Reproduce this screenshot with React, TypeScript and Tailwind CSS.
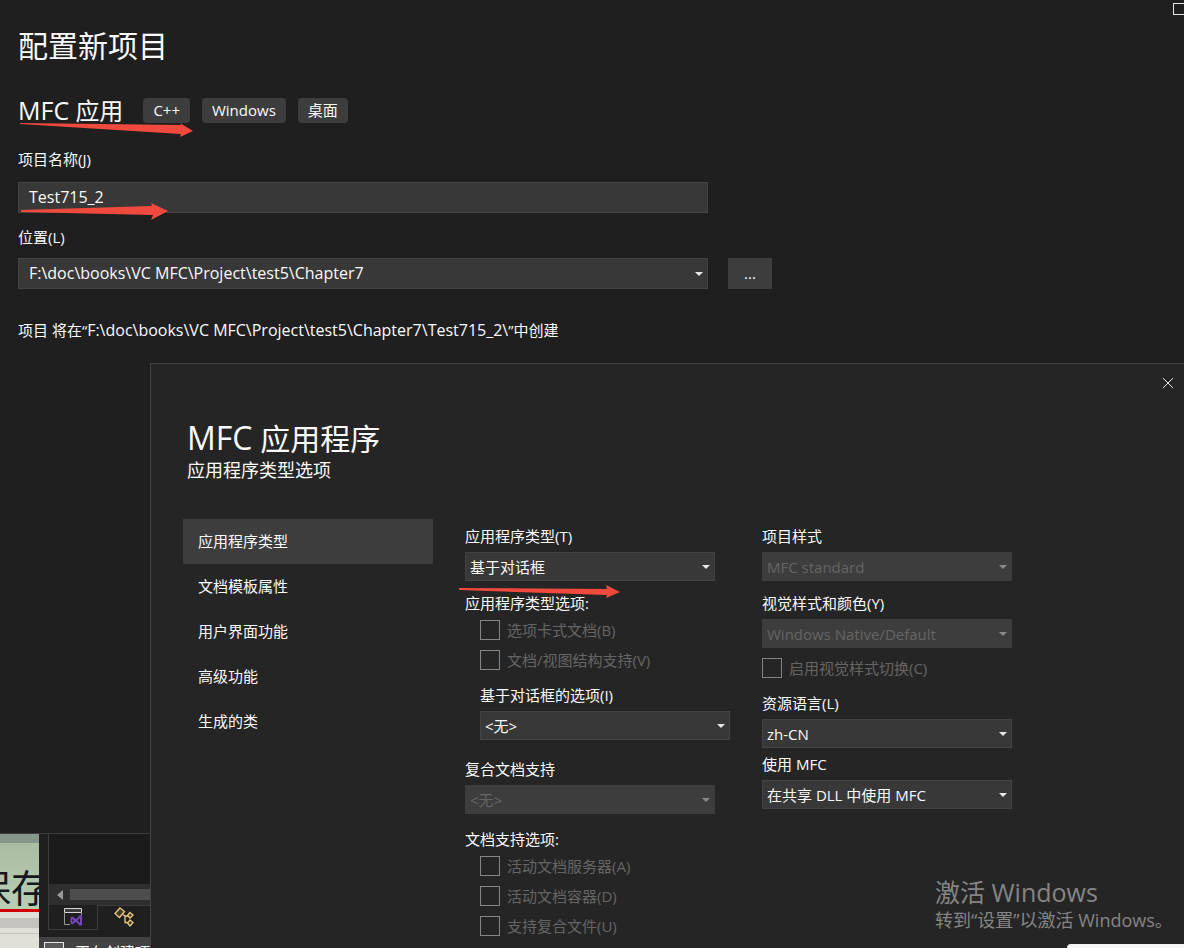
import { useId, useState } from 'react'
import type { ReactNode } from 'react'

const NAV_ITEMS = ['应用程序类型', '文档模板属性', '用户界面功能', '高级功能', '生成的类']

const TAGS = ['C++', 'Windows', '桌面']

const LOCATION = 'F:\\doc\\books\\VC MFC\\Project\\test5\\Chapter7'

function Caret({ disabled = false }: { disabled?: boolean }) {
  return (
    <svg
      viewBox="0 0 8 4"
      className={`pointer-events-none absolute right-[5px] top-1/2 -mt-0.5 h-1 w-2 ${
        disabled ? 'fill-[#8a8a8a]' : 'fill-[#e6e6e6]'
      }`}
      aria-hidden="true"
    >
      <path d="M0 0h8L4 4z" />
    </svg>
  )
}

interface SelectFieldProps {
  label: string
  options: string[]
  disabled?: boolean
  className?: string
}

function SelectField({ label, options, disabled = false, className = '' }: SelectFieldProps) {
  const id = useId()
  return (
    <div className={className}>
      <label htmlFor={id} className="block leading-5">
        {label}
      </label>
      <div className="relative mt-1.5">
        <select
          id={id}
          disabled={disabled}
          className={`block h-[29px] w-full appearance-none border pl-1 pr-5 pt-0.5 outline-none ${
            disabled
              ? 'border-[#3d3d3d] bg-[#3d3d3d] text-[#656565] opacity-100'
              : 'border-[#434343] bg-[#383838] text-[#fafafa]'
          }`}
        >
          {options.map((o) => (
            <option key={o}>{o}</option>
          ))}
        </select>
        <Caret disabled={disabled} />
      </div>
    </div>
  )
}

function CheckRow({ label }: { label: string }) {
  return (
    <label className="flex h-5 items-center gap-[7px] leading-5 text-[#656565]">
      <input
        type="checkbox"
        disabled
        className="size-5 shrink-0 appearance-none border border-[#858585] bg-transparent"
      />
      {label}
    </label>
  )
}

// red annotation stroke, tapered towards the tail
function Arrow({ className, children }: { className: string; children: ReactNode }) {
  return (
    <svg className={`pointer-events-none absolute fill-[#f04a3e] ${className}`} aria-hidden="true">
      {children}
    </svg>
  )
}

function ConfigureProject() {
  const [name, setName] = useState('Test715_2')
  return (
    <main className="flex-1 border-b border-[#3d3d3d] px-[18px] pt-[26px]">
      <h1 className="text-[30px] leading-10">配置新项目</h1>

      <div className="relative mt-7 flex h-8 items-center">
        <h2 className="mr-5 text-2xl leading-8">
          <span className="text-[25px]">MFC</span> 应用
        </h2>
        <ul className="flex gap-3">
          {TAGS.map((t) => (
            <li key={t} className="rounded bg-[#3d3d3d] px-2.5 leading-[25px]">
              {t}
            </li>
          ))}
        </ul>
        <Arrow className="left-0.5 top-[29px] h-4 w-[174px]">
          <path d="M0 0L161 2 160 0 173 8 160 14 161 11 0 1z" />
        </Arrow>
      </div>

      <label htmlFor="project-name" className="mt-[23px] block leading-5">
        项目名称(J)
      </label>
      <div className="relative mt-[13px] max-w-[690px]">
        <input
          id="project-name"
          type="text"
          value={name}
          onChange={(e) => setName(e.target.value)}
          className="block h-[31px] w-full border border-[#434343] bg-[#383838] px-2.5 pb-0.5 text-base outline-none"
        />
        <Arrow className="left-[3px] top-5 h-[19px] w-[148px]">
          <path d="M0 8L131 4 130 1 147 9 130 18 132 13 0 10z" />
        </Arrow>
      </div>

      <label htmlFor="location" className="mt-3.5 block leading-5">
        位置(L)
      </label>
      <div className="mt-[11px] flex gap-5">
        <div className="relative w-full max-w-[690px]">
          <select
            id="location"
            className="block h-[31px] w-full appearance-none border border-[#434343] bg-[#383838] px-2.5 pb-0.5 text-base outline-none"
          >
            <option>{LOCATION}</option>
          </select>
          <Caret />
        </div>
        <button type="button" className="h-[31px] w-11 shrink-0 bg-[#3d3d3d]" aria-label="浏览">
          ...
        </button>
      </div>

      <p className="mt-[31px] leading-5">
        项目 将在“
        <span className="text-base leading-5">
          {LOCATION}\{name}\
        </span>
        ”中创建
      </p>
    </main>
  )
}

function MfcDialog() {
  const [active, setActive] = useState(0)
  return (
    <section
      role="dialog"
      aria-labelledby="mfc-title"
      className="absolute bottom-0 left-[150px] right-0 top-[363px] overflow-hidden border-l border-t border-[#434343] bg-[#252525] pl-8 pt-[54px]"
    >
      <button type="button" aria-label="关闭" className="absolute right-[9px] top-3 p-px">
        <svg viewBox="0 0 12 12" className="size-3 stroke-[#e6e6e6]" fill="none">
          <path d="M1 1l10 10M11 1L1 11" />
        </svg>
      </button>

      <h2 id="mfc-title" className="ml-1 text-[30px] leading-10">
        <span className="text-[32px]">MFC</span> 应用程序
      </h2>
      <p className="ml-1 text-lg leading-[22px]">应用程序类型选项</p>

      <div className="mt-[38px] flex gap-8">
        <nav className="w-[250px] shrink-0">
          {NAV_ITEMS.map((item, i) => (
            <button
              key={item}
              type="button"
              onClick={() => setActive(i)}
              className={`block h-[45px] w-full px-[15px] text-left ${i === active ? 'bg-[#3d3d3d]' : ''}`}
            >
              {item}
            </button>
          ))}
        </nav>

        <div className="relative w-[265px] shrink-0 pt-[7px]">
          <SelectField label="应用程序类型(T)" options={['基于对话框', '单个文档', '多个文档']} className="w-[250px]" />
          <Arrow className="-left-1.5 top-[66px] h-3.5 w-[162px]">
            <path d="M0 3L148 4 147 0 161 7 147 13 148 10 0 5z" />
          </Arrow>

          <fieldset className="mt-3">
            <legend className="leading-5">应用程序类型选项:</legend>
            <div className="ml-[15px] mt-[7px] flex flex-col gap-2.5">
              <CheckRow label="选项卡式文档(B)" />
              <CheckRow label="文档/视图结构支持(V)" />
            </div>
          </fieldset>

          <SelectField label="基于对话框的选项(I)" options={['<无>']} className="ml-[15px] mt-[15px]" />
          <SelectField label="复合文档支持" options={['<无>']} disabled className="mt-[19px] w-[250px]" />

          <fieldset className="mt-[15px]">
            <legend className="leading-5">文档支持选项:</legend>
            <div className="ml-[15px] mt-[7px] flex flex-col gap-2.5">
              <CheckRow label="活动文档服务器(A)" />
              <CheckRow label="活动文档容器(D)" />
              <CheckRow label="支持复合文件(U)" />
            </div>
          </fieldset>
        </div>

        <div className="w-[250px] shrink-0 pt-[7px]">
          <SelectField label="项目样式" options={['MFC standard']} disabled />
          <SelectField label="视觉样式和颜色(Y)" options={['Windows Native/Default']} disabled className="mt-3" />
          <div className="mt-2.5">
            <CheckRow label="启用视觉样式切换(C)" />
          </div>
          <SelectField label="资源语言(L)" options={['zh-CN']} className="mt-[15px]" />
          <SelectField label="使用 MFC" options={['在共享 DLL 中使用 MFC']} className="mt-1.5" />
        </div>
      </div>
    </section>
  )
}

// windows that peek out below the project window
function BackgroundWindows() {
  return (
    <div className="flex h-[114px] shrink-0 overflow-hidden">
      <div className="flex w-[39px] flex-col overflow-hidden bg-[#e2dfd8]">
        <div className="h-[9px] shrink-0 bg-[#87968a]" />
        <div className="flex h-[66px] shrink-0 justify-end bg-linear-to-b from-[#a9bda3] to-[#b9cfb4] pt-[22px]">
          <span className="-mr-2.5 text-[38px] leading-[44px] whitespace-nowrap text-[#15191d]">保存</span>
        </div>
        <div className="h-[3px] shrink-0 bg-[#d40000]" />
        <div className="mt-1.5 h-2.5 shrink-0 bg-[#c6c3be]" />
        <div className="mt-[5px] h-px shrink-0 bg-[#c6c3be]" />
      </div>

      <div className="flex w-[111px] flex-col overflow-hidden bg-[#1f1f1f]">
        <div className="ml-[9px] h-[50px] shrink-0 border-l border-[#3d3d3d] bg-[#1b1b1b]" />
        <div className="ml-[9px] flex h-[21px] shrink-0 items-center gap-[7px] border-l border-[#3d3d3d] bg-[#2e2e2e] pl-2">
          <svg viewBox="0 0 6 10" className="h-2.5 w-1.5 fill-[#999999]" aria-hidden="true">
            <path d="M6 0v10L0 5z" />
          </svg>
          <div className="h-[11px] flex-1 bg-[#4d4d4d]" />
        </div>
        <div className="ml-[9px] flex h-[25px] shrink-0">
          <button
            type="button"
            aria-label="解决方案资源管理器"
            className="flex w-[50px] shrink-0 items-center justify-center border-x border-b border-[#3d3d3d]"
          >
            <svg viewBox="0 0 18 18" className="size-[18px]" fill="none" aria-hidden="true">
              <path d="M.5.5h17v4H.5z" fill="#3d3d3d" stroke="#d6d6d6" />
              <path d="M.5 4.5v12H6" stroke="#9a9a9a" />
              <path d="M17.500 4.500v3" stroke="#9a9a9a" />
              <path
                d="M6.500 9.500L8.500 8.500 12 11.200 16 7l2 1v9l-2 1-4-4.200L8.500 16.500 6.500 15.500zM8 11v3l1.800-1.500zM16 10l-2.700 2.500L16 15z"
                fill="#7346bd"
                fillRule="evenodd"
              />
            </svg>
          </button>
          <button
            type="button"
            aria-label="类视图"
            className="flex w-[52px] shrink-0 items-center justify-center border-t border-[#3d3d3d] pb-0.5"
          >
            <svg viewBox="0 0 20 20" className="size-5" fill="none" stroke="#ecc882" strokeWidth="1.3" aria-hidden="true">
              <path d="M6 1l4.500 3.500L5.500 10.500 1 6.500z" fill="#3f382b" />
              <path d="M9 7.500l2 1.500h3M11 9v6.500h2.500" />
              <path d="M16 5.500l3 2.500-3 3-2.500-2.500zM16 13l3 2.500-3 3.500-2.500-3z" fill="#3f382b" />
            </svg>
          </button>
        </div>
        <div className="mt-[7px] flex h-11 shrink-0 items-start gap-[11px] bg-[#424242] pl-[5px] pt-[5px]">
          <div className="h-4 w-5 shrink-0 border border-[#e6e6e6] bg-[#5a5a5a]" />
          <span className="whitespace-nowrap leading-5">正在创建项目</span>
        </div>
      </div>
    </div>
  )
}

export default function App() {
  return (
    <div className="relative flex min-h-screen flex-col overflow-hidden bg-[#1f1f1f] font-['Open_Sans','Noto_Sans_CJK_SC',sans-serif] text-[15px] text-[#fafafa]">
      <button
        type="button"
        aria-label="最大化"
        className="absolute -right-px top-[3px] size-3 border border-[#e6e6e6]"
      />
      <ConfigureProject />
      <BackgroundWindows />
      <MfcDialog />

      <div className="pointer-events-none absolute bottom-4 right-1 w-[245px] whitespace-nowrap text-[#858585]">
        <p className="text-[25px] leading-8">激活 Windows</p>
        <p className="text-lg leading-6">转到“设置”以激活 Windows。</p>
      </div>
      <div className="absolute bottom-0 right-0 h-1 w-[117px] rounded-tl bg-[#f5f5f5]" />
    </div>
  )
}
